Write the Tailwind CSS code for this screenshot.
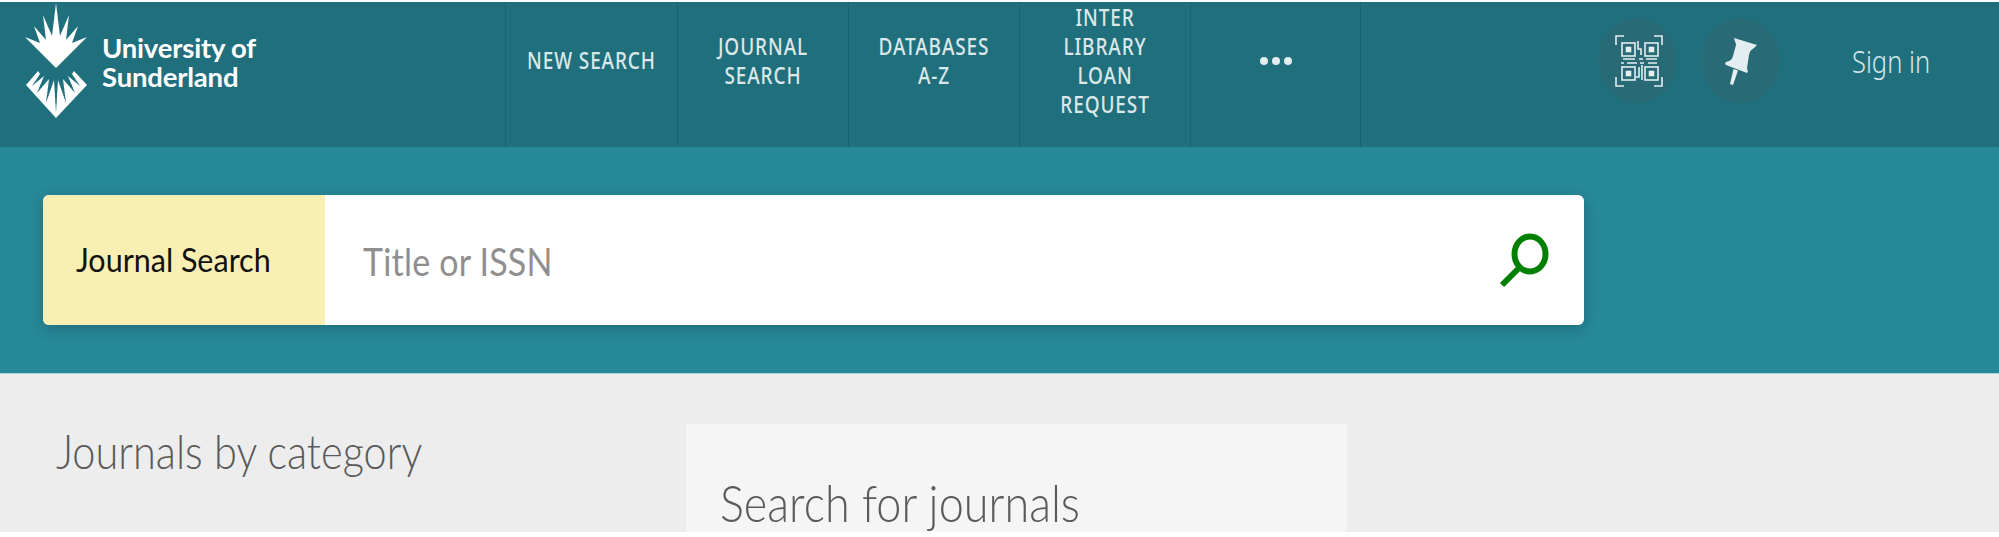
<!DOCTYPE html>
<html lang="en">
<head>
    <meta charset="UTF-8">
    <title>Journal Search</title>
    <script src="https://cdn.jsdelivr.net/npm/@tailwindcss/browser@4"></script>
</head>
<body class="h-[537px] overflow-hidden bg-white font-['Lato',sans-serif]">
    <div class="pt-[2px]">
        <!-- top bar -->
        <header class="flex h-[145px] bg-[#206f7c]">
            <div class="flex w-[505px] shrink-0">
                <svg class="w-[102px] h-[145px] -mt-[2px] shrink-0" viewBox="0 0 102 145" fill="#fff">
                    <polygon points="25,37 40,43 34,26 46,40 43,15 52,36 56,3 60,36 69,15 66,40 78,26 72,43 87,37 56,68"/>
                    <polygon points="26,85 38,71 40,74 32,86 44,76 37,93 49,79 46,103 54,80 56,113 58,80 66,103 63,79 75,93 68,76 80,86 72,74 74,71 87,85 56,118"/>
                </svg>
                <div class="pt-[31px] text-[27.5px] leading-[29px] font-bold text-white tracking-[-0.2px]">
                    <span class="block">University of</span>
                    <span class="block">Sunderland</span>
                </div>
            </div>
            <nav class="flex text-[#dbe8ea] font-['Noto_Sans',sans-serif] text-[19px] leading-[24px] tracking-[0.9px] font-medium">
                <a class="w-[172px] border-l border-[#1b626e] flex items-center justify-center pb-[27px] text-center"><span class="scale-y-[1.2]">NEW SEARCH</span></a>
                <a class="w-[171px] border-l border-[#1b626e] flex items-center justify-center pb-[27px] text-center"><span class="scale-y-[1.2]">JOURNAL<br>SEARCH</span></a>
                <a class="w-[171px] border-l border-[#1b626e] flex items-center justify-center pb-[27px] text-center"><span class="scale-y-[1.2]">DATABASES<br>A-Z</span></a>
                <a class="w-[171px] border-l border-[#1b626e] flex items-center justify-center pb-[27px] text-center"><span class="scale-y-[1.2]">INTER<br>LIBRARY<br>LOAN<br>REQUEST</span></a>
                <a class="w-[171px] border-x border-[#1b626e] flex justify-center pt-[55px] gap-[4px]">
                    <span class="size-[8px] rounded-full bg-[#e4eef0]"></span>
                    <span class="size-[8px] rounded-full bg-[#e4eef0]"></span>
                    <span class="size-[8px] rounded-full bg-[#e4eef0]"></span>
                </a>
            </nav>
            <div class="ml-[238px] flex gap-[26px] pt-[16px]">
                <div class="w-[77px] h-[85px] rounded-full bg-[#286b76] flex items-center justify-center">
                    <!-- qr code -->
                    <svg class="w-[48px] h-[52px] ml-[2px]" viewBox="0 0 48 52" fill="none" stroke="#e4eef0" stroke-width="1.6">
                        <path d="M1 10V1H9M39 1H47V10M1 42V51H9M39 51H47V42"/>
                        <rect x="7" y="8" width="13" height="13"/><rect x="11.5" y="12.5" width="4" height="4" fill="#e4eef0"/>
                        <rect x="30" y="8" width="13" height="13"/><rect x="34.5" y="12.5" width="4" height="4" fill="#e4eef0"/>
                        <rect x="7" y="32" width="13" height="13"/><rect x="11.5" y="36.5" width="4" height="4" fill="#e4eef0"/>
                        <rect x="30" y="32" width="13" height="13"/><rect x="34.5" y="36.5" width="4" height="4" fill="#e4eef0"/>
                        <path d="M23 6V14H26V20M24 32V42H21M27 30V45"/>
                        <path d="M8 24H20M24 24H28M31 24H42M6 28H9M12 28H22M25 28H29M33 28H42"/>
                    </svg>
                </div>
                <div class="w-[77px] h-[85px] rounded-full bg-[#286b76] flex items-center justify-center">
                    <!-- pin -->
                    <svg class="w-[34px] h-[48px]" viewBox="0 0 34 48" fill="#e4eef0">
                        <path d="M10 1L33 8L30 11C27 13 26 14 25 18L23 31C24 34 24 35 23 36L2 28C1 27 1 26 2 25C7 24 8 22 9 19L12 8C12 6 11 5 10 1Z"/>
                        <path d="M9.5 32L14 33.5L9 48L6 47Z"/>
                    </svg>
                </div>
            </div>
            <a class="ml-[73px] pt-[42px] text-[25.5px] leading-[34px] text-[#d5e6e9] font-['Noto_Sans',sans-serif] font-light"><span class="block scale-y-[1.2]">Sign in</span></a>
        </header>

        <!-- search band -->
        <section class="h-[227px] bg-[#278899] border-b border-[#a9d3da] pl-[43px] pt-[48px]">
            <div class="flex h-[130px] w-[1541px] rounded-[6px] overflow-hidden shadow-[0_4px_14px_rgba(0,0,0,0.2)] bg-white">
                <div class="w-[282px] bg-[#f9efb2] pl-[33px] flex items-center text-[30.5px] text-[#111]"><span class="scale-y-[1.1]">Journal Search</span></div>
                <div class="flex-1 pl-[38px] flex items-center text-[34px] tracking-[0.2px] text-[#8f8f8f]"><span class="scale-y-[1.15]">Title or ISSN</span></div>
                <div class="pr-[35px] flex items-center">
                    <svg class="w-[50px] h-[60px]" viewBox="0 0 50 60" fill="none" stroke="#008000">
                        <ellipse cx="31" cy="24" rx="15.5" ry="17.5" stroke-width="6"/>
                        <path d="M19 39L3 55" stroke-width="6"/>
                    </svg>
                </div>
            </div>
        </section>

        <!-- content -->
        <section class="h-[158px] bg-[#ededed] flex overflow-hidden font-light text-[#5a5a5a]">
            <div class="w-[686px] shrink-0 pl-[56px] pt-[53px]">
                <h2 class="text-[41.5px] leading-[48px] font-light"><span class="inline-block scale-y-[1.15]">Journals by category</span></h2>
            </div>
            <div class="w-[661px] mt-[50px] bg-[#f5f5f5] pl-[34px] pt-[50px]">
                <h2 class="text-[45px] leading-[56px] font-light"><span class="inline-block scale-y-[1.15]">Search for journals</span></h2>
            </div>
        </section>
    </div>
</body>
</html>
